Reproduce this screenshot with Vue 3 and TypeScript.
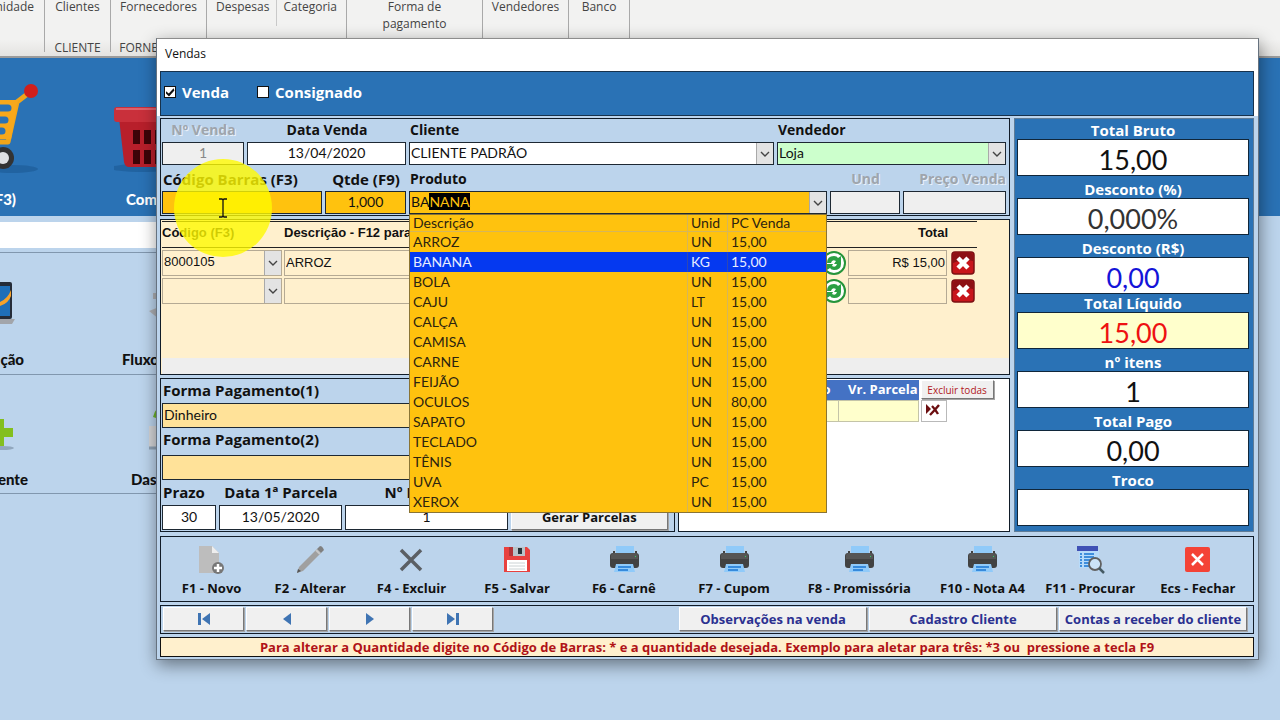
<script setup lang="ts">
import { onMounted, ref } from 'vue'

interface Product { name: string; unit: string; price: string }
interface Total { id: string; label: string; value: string; tone?: string }
interface Action { label: string; icon: string }
interface Item { code: string; name: string; total: string }

const products: Product[] = [
  { name: 'ARROZ', unit: 'UN', price: '15,00' },
  { name: 'BANANA', unit: 'KG', price: '15,00' },
  { name: 'BOLA', unit: 'UN', price: '15,00' },
  { name: 'CAJU', unit: 'LT', price: '15,00' },
  { name: 'CALÇA', unit: 'UN', price: '15,00' },
  { name: 'CAMISA', unit: 'UN', price: '15,00' },
  { name: 'CARNE', unit: 'UN', price: '15,00' },
  { name: 'FEIJÃO', unit: 'UN', price: '15,00' },
  { name: 'OCULOS', unit: 'UN', price: '80,00' },
  { name: 'SAPATO', unit: 'UN', price: '15,00' },
  { name: 'TECLADO', unit: 'UN', price: '15,00' },
  { name: 'TÊNIS', unit: 'UN', price: '15,00' },
  { name: 'UVA', unit: 'PC', price: '15,00' },
  { name: 'XEROX', unit: 'UN', price: '15,00' },
]

const totals: Total[] = [
  { id: 'gross', label: 'Total Bruto', value: '15,00' },
  { id: 'discount-pct', label: 'Desconto (%)', value: '0,000%', tone: 'soft' },
  { id: 'discount', label: 'Desconto (R$)', value: '0,00', tone: 'blue' },
  { id: 'net', label: 'Total Líquido', value: '15,00', tone: 'net' },
  { id: 'count', label: 'nº itens', value: '1' },
  { id: 'paid', label: 'Total Pago', value: '0,00' },
  { id: 'change', label: 'Troco', value: '' },
]

const actions: Action[] = [
  { label: 'F1 - Novo', icon: 'new' },
  { label: 'F2 - Alterar', icon: 'edit' },
  { label: 'F4 - Excluir', icon: 'remove' },
  { label: 'F5 - Salvar', icon: 'save' },
  { label: 'F6 - Carnê', icon: 'print' },
  { label: 'F7 - Cupom', icon: 'print' },
  { label: 'F8 - Promissória', icon: 'print' },
  { label: 'F10 - Nota A4', icon: 'print' },
  { label: 'F11 - Procurar', icon: 'search' },
  { label: 'Ecs - Fechar', icon: 'close' },
]

const items: Item[] = [
  { code: '8000105', name: 'ARROZ', total: 'R$ 15,00' },
  { code: '', name: '', total: '' },
]

const sale = ref(true)
const consigned = ref(false)
const product = ref('BANANA')
const productInput = ref<HTMLInputElement | null>(null)

// The typed prefix stays plain; the autocompleted rest is selected.
onMounted(() => {
  productInput.value?.focus()
  productInput.value?.setSelectionRange(2, product.value.length)
})
</script>

<template>
  <div class="app">
    <nav class="ribbon">
      <div class="group g-unit"><a href="#">Unidade</a></div>
      <div class="group g-client"><a href="#">Clientes</a><span>CLIENTE</span></div>
      <div class="group g-supplier"><a href="#">Fornecedores</a><span>FORNECEDOR</span></div>
      <div class="group g-expense"><a href="#">Despesas</a><i></i><a href="#">Categoria</a></div>
      <div class="group g-payment"><a href="#">Forma de pagamento</a></div>
      <div class="group g-seller"><a href="#">Vendedores</a></div>
      <div class="group g-bank"><a href="#">Banco</a></div>
    </nav>

    <main class="desk">
      <section class="band">
        <a href="#" class="tile edge">
          <svg width="40" height="92" viewBox="0 0 40 92" aria-hidden="true">
            <ellipse cx="12" cy="87" rx="26" ry="4" fill="#1d5a94" opacity=".6" />
            <path d="M30 10 17 20 8 60H-4" fill="none" stroke="#f0a51a" stroke-width="5" stroke-linejoin="round" />
            <path d="M-4 18H18L11 57H-4Z" fill="#f7a81b" />
            <path d="M-4 26H8M-4 38H5M-4 49H2" stroke="#2a72b5" stroke-width="7" stroke-linecap="round" />
            <circle cx="31" cy="9" r="7" fill="#d01f1c" />
            <circle cx="3" cy="76" r="11" fill="#333" />
            <circle cx="3" cy="76" r="6" fill="#dfe1e3" />
          </svg>
          <b class="in-12">F3)</b>
        </a>
        <a href="#" class="tile">
          <svg width="60" height="92" viewBox="0 0 60 92" aria-hidden="true">
            <ellipse cx="28" cy="86" rx="32" ry="4" fill="#1d5a94" opacity=".6" />
            <path d="M5 36H60V85H15Q11 85 10 80Z" fill="#b81f2b" />
            <rect y="25" width="64" height="15" rx="3" fill="#c9303b" />
            <path d="M2 27H60" stroke="#e0606a" stroke-width="2" />
            <path d="M19 48h7v14h-7zM30 48h7v14h-7zM41 48h7v14h-7zM19 68h7v14h-7zM30 68h7v14h-7zM41 68h7v14h-7z" fill="#3d0408" />
          </svg>
          <b>Compras</b>
        </a>
      </section>
      <div class="search"></div>
      <section class="row row-a">
        <a href="#" class="tile edge">
          <svg width="16" height="46" viewBox="0 0 16 46" aria-hidden="true">
            <rect x="-20" y="1" width="32" height="37" rx="2" fill="#252c38" />
            <rect x="-20" y="5" width="30" height="30" fill="#1f6fb8" />
            <path d="M-4 22Q7 20 11 9V15Q8 24-4 26Z" fill="#f6a22a" />
            <path d="M-20 38H15L12 43H-20Z" fill="#a2a5aa" />
          </svg>
          <b class="in-4">ção</b>
        </a>
        <a href="#" class="tile">
          <svg class="push" width="20" height="46" viewBox="0 0 20 46" aria-hidden="true">
            <path d="M4 12H20V18H4ZM20 22V38H10L0 30Z" fill="#aeb0b4" />
          </svg>
          <b>Fluxo de Caixa</b>
        </a>
      </section>
      <section class="row row-b">
        <a href="#" class="tile edge">
          <svg width="16" height="56" viewBox="0 0 16 56" aria-hidden="true">
            <ellipse cx="2" cy="51" rx="12" ry="2" fill="#91a7bd" />
            <path d="M-8 22H4V31H13V40H4V49H-8Z" fill="#83bf1e" />
          </svg>
          <b class="in-0">ente</b>
        </a>
        <a href="#" class="tile">
          <svg class="push" width="20" height="56" viewBox="0 0 20 56" aria-hidden="true">
            <path d="M4 20Q6 10 18 4V14Q12 18 10 22Z" fill="#6db52b" />
            <rect y="29" width="20" height="21" fill="#d4d5d7" />
            <path d="M-4 51H20" stroke="#8fa2b5" stroke-width="3" />
          </svg>
          <b class="das">Dashboard</b>
        </a>
      </section>
    </main>

    <section class="dialog" role="dialog" aria-labelledby="dialog-title">
      <h1 id="dialog-title">Vendas</h1>
      <div class="modes">
        <label><input v-model="sale" type="checkbox" />Venda</label>
        <label><input v-model="consigned" type="checkbox" />Consignado</label>
      </div>

      <div class="body">
        <div class="columns">
          <div class="work">
            <form class="panel head" @submit.prevent>
              <div class="line first">
                <div class="field center off"><label for="number">Nº Venda</label><input id="number" value="1" disabled /></div>
                <div class="field center"><label for="date">Data Venda</label><input id="date" value="13/04/2020" /></div>
                <div class="field">
                  <label for="client">Cliente</label>
                  <div class="combo">
                    <select id="client"><option>CLIENTE PADRÃO</option></select>
                    <span class="arrow"><svg width="10" height="6" viewBox="0 0 10 6"><path d="m1 1 4 4 4-4" /></svg></span>
                  </div>
                </div>
                <div class="field">
                  <label for="seller">Vendedor</label>
                  <div class="combo green">
                    <select id="seller"><option>Loja</option></select>
                    <span class="arrow"><svg width="10" height="6" viewBox="0 0 10 6"><path d="m1 1 4 4 4-4" /></svg></span>
                  </div>
                </div>
              </div>
              <div class="line second">
                <div class="field"><label for="barcode" class="large">Código Barras (F3)</label><input id="barcode" class="amber" /></div>
                <div class="field center"><label for="qty" class="large">Qtde (F9)</label><input id="qty" class="amber" value="1,000" /></div>
                <div class="field product">
                  <label for="product">Produto</label>
                  <div class="combo">
                    <input id="product" ref="productInput" v-model="product" class="amber" autocomplete="off" />
                    <button type="button" class="arrow" aria-label="Produto"><svg width="10" height="6" viewBox="0 0 10 6"><path d="m1 1 4 4 4-4" /></svg></button>
                  </div>
                  <table class="menu">
                    <colgroup><col /><col class="c-unit" /><col class="c-price" /></colgroup>
                    <thead><tr><th>Descrição</th><th>Unid</th><th>PC Venda</th></tr></thead>
                    <tbody>
                      <tr v-for="p in products" :key="p.name" :class="{ current: p.name === product }">
                        <td>{{ p.name }}</td><td>{{ p.unit }}</td><td>{{ p.price }}</td>
                      </tr>
                    </tbody>
                  </table>
                </div>
                <div class="field center off"><label for="unit">Und</label><input id="unit" disabled /></div>
                <div class="field off right"><label for="price">Preço Venda</label><input id="price" disabled /></div>
              </div>
            </form>

            <div class="panel items">
              <table>
                <colgroup><col class="c-code" /><col /><col class="c-icon" /><col class="c-total" /><col class="c-icon" /></colgroup>
                <thead><tr><th>Código (F3)</th><th>Descrição - F12 para</th><th></th><th class="total">Total</th><th></th></tr></thead>
                <tbody>
                  <tr v-for="(item, i) in items" :key="i">
                    <td>
                      <div class="combo thin">
                        <select :aria-label="'Código ' + (i + 1)"><option>{{ item.code }}</option></select>
                        <span class="arrow"><svg width="10" height="6" viewBox="0 0 10 6"><path d="m1 1 4 4 4-4" /></svg></span>
                      </div>
                    </td>
                    <td><input class="cell" :value="item.name" :aria-label="'Descrição ' + (i + 1)" /></td>
                    <td>
                      <button class="bare" aria-label="Atualizar">
                        <svg width="24" height="24" viewBox="0 0 24 24">
                          <circle cx="12" cy="12" r="11" fill="#fff" stroke="#25943a" stroke-width="2" />
                          <path d="M5 12Q5 5 12 5q3 0 4 2l3-2v8h-7l2-3q-4-2-5 2ZM19 13q0 6-7 6-3 0-4-2l-3 2v-6h6l-1 2q4 2 5-2Z" fill="#2ba044" />
                        </svg>
                      </button>
                    </td>
                    <td><input class="cell amount" :value="item.total" :aria-label="'Total ' + (i + 1)" /></td>
                    <td>
                      <button class="bare" aria-label="Remover">
                        <svg width="24" height="24" viewBox="0 0 24 24">
                          <rect x="1" y="1" width="22" height="22" rx="3" fill="#c8151b" stroke="#7c1013" stroke-width="1.5" />
                          <path d="M2 4q0-2 2-2h16q2 0 2 2v6Q12 7 2 12Z" fill="#8d1114" />
                          <path d="m7 7 10 10M17 7 7 17" stroke="#fff" stroke-width="4.5" />
                        </svg>
                      </button>
                    </td>
                  </tr>
                </tbody>
              </table>
              <div class="scroll"></div>
            </div>

            <div class="bottom">
              <form class="panel pay" @submit.prevent>
                <div class="field"><label for="pay1">Forma Pagamento(1)</label><input id="pay1" class="sand" value="Dinheiro" /></div>
                <div class="field"><label for="pay2">Forma Pagamento(2)</label><input id="pay2" class="sand" /></div>
                <div class="line terms">
                  <div class="field"><label for="term">Prazo</label><input id="term" value="30" /></div>
                  <div class="field center"><label for="due">Data 1ª Parcela</label><input id="due" value="13/05/2020" /></div>
                  <div class="field center"><label for="parts">Nº Parcelas</label><input id="parts" value="1" /></div>
                  <button type="button" class="raised">Gerar Parcelas</button>
                </div>
              </form>
              <div class="panel parts">
                <table>
                  <thead><tr><th>Vencimento</th><th>Vr. Parcela</th></tr></thead>
                  <tbody><tr><td></td><td></td></tr></tbody>
                </table>
                <div class="parts-tools">
                  <button class="raised clear">Excluir todas</button>
                  <button class="drop" aria-label="Excluir parcela">
                    <svg width="16" height="14" viewBox="0 0 16 14"><path d="M1 1v10l5-5Z" fill="#6b0e10" /><path d="M5 12Q9 8 14 2M7 3q3 3 6 8" fill="none" stroke="#6b0e10" stroke-width="2.4" /></svg>
                  </button>
                </div>
              </div>
            </div>
          </div>

          <aside class="totals">
            <div v-for="t in totals" :key="t.id" class="total-box" :class="[t.id, t.tone]">
              <label :for="t.id">{{ t.label }}</label>
              <input :id="t.id" :value="t.value" readonly />
            </div>
          </aside>
        </div>

        <div class="panel actions">
          <button v-for="a in actions" :key="a.label">
            <svg width="30" height="30" viewBox="0 0 30 30" aria-hidden="true">
              <g v-if="a.icon === 'new'">
                <path d="M2 2H15L22 9V29H2Z" fill="#bdbdbd" /><path d="M15 2V9H22Z" fill="#eee" />
                <circle cx="21" cy="24" r="6" fill="#777" /><path d="M21 20v8M17 24h8" stroke="#fff" stroke-width="2.5" />
              </g>
              <g v-else-if="a.icon === 'edit'">
                <path d="M2 29 4 23 22 5 26 9 8 27Z" fill="#a0a0a0" /><path d="M22 5 25 2Q27 2 28 4L29 6 26 9Z" fill="#808080" />
                <path d="M21 6 25 10" stroke="#c8c8c8" stroke-width="2" /><path d="M2 29 3 25 6 27Z" fill="#555" />
              </g>
              <path v-else-if="a.icon === 'remove'" d="M5 6 25 26M25 6 5 26" stroke="#5b5f64" stroke-width="3.5" />
              <g v-else-if="a.icon === 'save'">
                <path d="M2 3H25L28 6V28H2Z" fill="#e8413f" /><path d="M7 3H23V12H7Z" fill="#b9c4ca" />
                <path d="M7 3H11V12H7Z" fill="#b23438" /><path d="M16 4H20V10H16Z" fill="#26343b" />
                <path d="M5 16H25V27H5Z" fill="#fff" /><path d="M7 19H23M7 22H23M7 25H23" stroke="#ccd2d4" />
              </g>
              <g v-else-if="a.icon === 'print'">
                <path d="M7 2H25V10H7Z" fill="#90caf9" /><path d="M4 7H6V11H4ZM26 7H28V11H26Z" fill="#424242" />
                <rect x="1" y="9" width="29" height="15" rx="3" fill="#424242" /><path d="M2 12Q2 9 5 9H26Q29 9 29 12V15H2Z" fill="#555" />
                <path d="M26 12h1v1h-1z" fill="#2fd063" /><path d="M7 20H24L26 28H5Z" fill="#90caf9" />
                <path d="M9 23H22M9 26H19" stroke="#1976d2" stroke-width="1.5" />
              </g>
              <g v-else-if="a.icon === 'search'">
                <path d="M4 6H24V24H4Z" fill="#b7dbfa" /><path d="M2 2H23V7H2Z" fill="#3f51b5" />
                <path d="M5 10H7M9 10H19M5 13H7M9 13H19M5 16H7M9 16H16M5 19H7M9 19H14M5 22H7M9 22H14" stroke="#1976d2" stroke-width="1.5" />
                <circle cx="20" cy="20" r="6" fill="#cbe3f8" stroke="#616161" stroke-width="1.8" /><path d="m24 24 5 5" stroke="#455a64" stroke-width="2.5" />
              </g>
              <g v-else>
                <rect x="2" y="3" width="25" height="25" rx="2" fill="#f44336" /><path d="M9 10 20 21M20 10 9 21" stroke="#fff" stroke-width="2.5" />
              </g>
            </svg>
            <span>{{ a.label }}</span>
          </button>
        </div>

        <div class="panel browse">
          <div class="steps">
            <button class="raised" aria-label="Primeiro"><svg width="14" height="14" viewBox="0 0 14 14"><path d="M1 1H4V13H1ZM13 1V13L5 7Z" /></svg></button>
            <button class="raised" aria-label="Anterior"><svg width="14" height="14" viewBox="0 0 14 14"><path d="M11 1V13L3 7Z" /></svg></button>
            <button class="raised" aria-label="Próximo"><svg width="14" height="14" viewBox="0 0 14 14"><path d="M3 1V13L11 7Z" /></svg></button>
            <button class="raised" aria-label="Último"><svg width="14" height="14" viewBox="0 0 14 14"><path d="M13 1H10V13H13ZM1 1V13L9 7Z" /></svg></button>
          </div>
          <div class="links">
            <button class="raised">Observações na venda</button>
            <button class="raised">Cadastro Cliente</button>
            <button class="raised">Contas a receber do cliente</button>
          </div>
        </div>

        <p class="hint">Para alterar a Quantidade digite no Código de Barras: * e a quantidade desejada. Exemplo para aletar para três: *3 ou&nbsp; pressione a tecla F9</p>
      </div>
    </section>

    <div class="spot">
      <svg width="10" height="20" viewBox="0 0 10 20" aria-hidden="true"><path d="M1 1H4L5 2 6 1H9M5 2V18M1 19H4L5 18 6 19H9" fill="none" stroke="#111" stroke-width="1.3" /></svg>
    </div>
  </div>
</template>

<style>
body { margin: 0; }
</style>

<style scoped>
* { box-sizing: border-box; }
.app {
  position: relative; min-height: 100vh; overflow: hidden; background: #bcd4ec;
  font: 14px/18px Lato, "Liberation Sans", sans-serif; color: #111;
}
a { color: inherit; text-decoration: none; }
button, input, select { font: inherit; color: inherit; margin: 0; border-radius: 0; }
label, b { font-family: "Open Sans", "Noto Sans", sans-serif; font-weight: 700; }

.ribbon {
  display: flex; height: 58px; background: linear-gradient(#f2f2f1 70%, #e4e3e1);
  border-bottom: 2px solid #9b9b9b; color: #444;
  font: 12px/17px "Open Sans", "Noto Sans", sans-serif; text-align: center;
}
.group {
  display: flex; flex-wrap: wrap; justify-content: center; align-content: space-between;
  height: 54px; margin-top: -2px; border-right: 1px solid #a9a9a9; flex: none;
}
.group a { padding: 0 6px; }
.group span { flex: 0 0 100%; margin-bottom: -4px; }
.g-unit { width: 45px; justify-content: flex-end; flex-wrap: nowrap; }
.g-unit a { padding-right: 10px; }
.g-client { width: 66px; }
.g-supplier { width: 96px; }
.g-supplier a { padding: 0; }
.g-expense { width: 140px; flex-wrap: nowrap; justify-content: space-between; padding: 0 9px; }
.g-expense a { padding: 0; }
.g-expense i { width: 1px; height: 28px; background: #c9c9c9; }
.g-payment { width: 136px; }
.g-payment a { width: 90px; }
.g-seller { width: 86px; }
.g-bank { width: 61px; }

.tile { display: flex; flex-direction: column; justify-content: space-between; width: 120px; white-space: nowrap; font-size: 15px; }
.tile.edge { width: 40px; align-items: flex-start; }
.tile b { font-family: Lato, sans-serif; font-weight: 900; }
.edge b { display: flex; justify-content: flex-end; }
.edge .in-12 { width: 16px; }
.edge .in-4 { width: 24px; }
.edge .in-0 { width: 28px; }
.band { display: flex; height: 158px; padding: 24px 0 8px; background: #2a72b5; color: #fff; }
.band .tile:not(.edge) { margin-left: 74px; }
.band .tile:not(.edge) b { padding-left: 12px; }
.search { height: 32px; margin-right: 60px; background: #fff; border-top: 6px solid #bcd4ec; }
.row { display: flex; margin-right: 60px; border-top: 1px solid #8197ae; }
.row-a { height: 122px; margin-top: 4px; padding: 28px 0 6px; }
.row-b { height: 120px; padding: 22px 0 5px; border-bottom: 1px solid #8197ae; }
.row .tile:not(.edge) { margin-left: 82px; }
.push { margin-left: 27px; }
.das { padding-left: 9px; }

.dialog {
  position: absolute; left: 156px; right: 21px; top: 38px; background: #bcd4ec;
  border: 1px solid #66727f; border-top-color: #8d8d8d; box-shadow: 1px 5px 16px rgba(0, 0, 0, .45);
}
h1 { margin: 0; padding: 6px 8px 8px; background: #fff; font: 12px/18px "Open Sans", "Noto Sans", sans-serif; }
.modes {
  display: flex; gap: 28px; align-items: center; height: 45px; padding: 0 3px 3px; margin: 0 4px 0 3px;
  background: #2a72b5; color: #fff; border: 1px solid #17324c; box-shadow: 0 0 0 4px #fff; clip-path: inset(0 -4px 0 -3px);
}
.modes label { display: flex; align-items: center; gap: 6px; font-size: 15px; }
.modes input { appearance: none; width: 12px; height: 12px; background: #fff; border: 1px solid #111; }
.modes input:checked::before {
  content: ""; display: block; width: 10px; height: 10px; background: #111;
  clip-path: polygon(10% 42%, 38% 66%, 86% 12%, 94% 34%, 40% 94%, 10% 64%);
}
.body { display: flex; flex-direction: column; gap: 3px; padding: 2px 4px 2px 3px; }
.columns { display: flex; gap: 4px; margin-bottom: 1px; }
.work { flex: 1; min-width: 0; display: flex; flex-direction: column; gap: 3px; }
.panel { border: 1px solid #111c28; }

.field { display: flex; flex-direction: column; min-width: 0; }
.field label { height: 23px; line-height: 22px; padding-left: 1px; white-space: nowrap; }
.field label.large { font-size: 15px; }
.field input, .combo select { width: 100%; height: 23px; padding: 0 1px 2px; background: #fff; border: 1px solid #1d2833; outline: 0; }
.center label, .center input { text-align: center; }
.off label { color: #9fa5ac; text-shadow: 1px 1px #e9f1fa; }
.off input { background: #efefef; color: #888; }
.line { display: grid; gap: 3px; }
.head { display: flex; flex-direction: column; gap: 3px; padding: 0 3px 1px 1px; }
.first { grid-template-columns: 82px 159px minmax(0, 1fr) 229px; }
.second { grid-template-columns: 160px 81px minmax(0, 1fr) 70px 103px; }
.second .right label { display: flex; justify-content: flex-end; }
.field .amber { background: #ffc20e; }
.amber::selection { background: #000; color: #ffc20e; }
.combo { position: relative; display: flex; }
.combo select { appearance: none; }
.green select { background: #ccffcc; }
.arrow {
  position: absolute; right: 1px; top: 1px; bottom: 1px; width: 17px; padding: 0;
  display: flex; align-items: center; justify-content: center;
  background: #e3e3e3; border: 0; border-left: 1px solid #a9a9a9; pointer-events: none;
}
.arrow path { fill: none; stroke: #444; stroke-width: 1.4; }

.product { position: relative; }
.menu {
  position: absolute; z-index: 2; top: 100%; left: 0; width: 100%; height: 299px; table-layout: fixed;
  border-collapse: separate; border-spacing: 0; background: #ffc20e; border: 1px solid #8a7434; color: #2c2410;
}
.c-unit { width: 40px; }
.c-price { width: 99px; }
.menu th, .menu td { padding: 0 3px; text-align: left; font-weight: 400; line-height: 16px; border-left: 1px solid #d6b65a; }
.menu th:first-child, .menu td:first-child { border-left: 0; }
.menu th { border-bottom: 1px solid #d6b65a; }
.menu .current td { background: #0539f0; color: #e8ecff; border-color: #3148b0; }

.items { height: 156px; display: flex; flex-direction: column; background: #fff0cd; padding: 1px 0 0 1px; }
.items table { width: calc(100% - 32px); table-layout: fixed; border-spacing: 0; font: 13px/18px "Liberation Sans", Arial, sans-serif; }
.items th { height: 27px; padding: 0 0 4px; text-align: left; border: solid #222; border-width: 1px 0; white-space: nowrap; overflow: hidden; }
.items th.total { text-align: right; padding-right: 1px; }
.items td { padding: 2px 2px 0 0; height: 28px; vertical-align: top; }
.c-code { width: 122px; }
.c-icon { width: 28px; }
.c-total { width: 101px; }
.items .cell, .items .combo select { display: block; width: 100%; height: 26px; padding: 0 1px 2px; background: #fff0cd; border: 1px solid #b5aa94; outline: 0; }
.items .amount { text-align: right; }
.bare { display: flex; background: none; border: 0; padding: 1px 2px; }
.scroll { margin-top: auto; height: 16px; background: #eee; }

.bottom { display: grid; grid-template-columns: minmax(0, 514fr) minmax(0, 332fr); gap: 3px; }
.pay { padding: 0 6px 1px 1px; }
.parts { background: #fff; display: flex; gap: 2px; padding-top: 1px; }
.field input, .pay input { min-width: 0; }
.pay .field input { height: 25px; }
.pay .field .sand { background: #ffe299; }
.pay .field label { height: 24px; font-size: 15px; }
.pay > .field + .field label { height: 27px; }
.terms { grid-template-columns: 54px 123px 163px minmax(0, 1fr); align-items: end; margin-top: 1px; }
.terms input { text-align: center; }
.raised {
  background: #f0f0f0; border: 1px solid; border-color: #fff #777 #777 #fff; box-shadow: 1px 1px #a5a5a5; padding: 0;
  font: 700 13px/17px "Open Sans", "Noto Sans", sans-serif; white-space: nowrap;
}
.terms .raised { height: 25px; }
.parts table { width: 240px; height: 42px; border-spacing: 0; table-layout: fixed; }
.parts th { height: 20px; padding: 0 1px 2px; background: #4472c4; color: #fff; text-align: right; font: 700 13px/16px "Open Sans", sans-serif; }
.parts th:first-child { padding-right: 8px; width: 160px; }
.parts td { background: #ffffcc; border: 1px solid #c4c4a8; border-left: 0; }
.parts-tools { display: flex; flex-direction: column; align-items: flex-start; gap: 1px; }
.parts .clear { height: 19px; width: 73px; color: #b01822; font-weight: 400; font-size: 10px; line-height: 14px; }
.drop { display: flex; width: 26px; height: 22px; padding: 2px 3px; background: #fff; border: 1px solid #b9b9b9; }

.totals { width: 240px; background: #2a72b5; border: 1px solid #5f7c97; padding: 0 4px 5px 2px; }
.total-box { display: flex; flex-direction: column; }
.total-box label { height: 22px; line-height: 26px; text-align: center; color: #fff; font-size: 15px; }
.total-box.gross label { height: 20px; line-height: 23px; }
.total-box.net label { height: 18px; line-height: 19px; }
.total-box input { width: 100%; height: 37px; padding: 3px 0 0; text-align: center; font-size: 27px; border: 1px solid #10263a; background: #fff; outline: 0; }
.soft input { color: #333; }
.blue input { color: #1414d8; }
.net input { color: #ee1111; background: #ffffcc; }

.actions { display: grid; grid-template-columns: 99fr 98fr 104fr 107fr 106fr 114fr 136fr 110fr 105fr 110fr; padding: 7px 0 4px 1px; }
.actions button { display: flex; flex-direction: column; align-items: center; gap: 5px; padding: 0; border: 0; background: none; min-width: 0; font: 700 13px/18px "Open Sans", "Noto Sans", sans-serif; white-space: nowrap; }
.browse { display: flex; justify-content: space-between; padding: 1px 6px 2px 2px; }
.steps, .links { display: flex; gap: 2px; }
.browse button { height: 24px; color: #2b3190; }
.steps button { width: 81px; display: flex; align-items: center; justify-content: center; }
.steps path { fill: #3f74b3; }
.links button { width: 188px; }
.hint { margin: 0; background: #fff0cd; border: 1px solid #111; color: #b01217; font: 700 13px/18px "Open Sans", "Noto Sans", sans-serif; text-align: center; white-space: nowrap; }

.spot {
  position: absolute; left: 174px; top: 159px; width: 98px; height: 98px; border-radius: 50%; pointer-events: none;
  background: rgba(255, 250, 0, .8); display: flex; align-items: center; justify-content: center;
}
</style>
